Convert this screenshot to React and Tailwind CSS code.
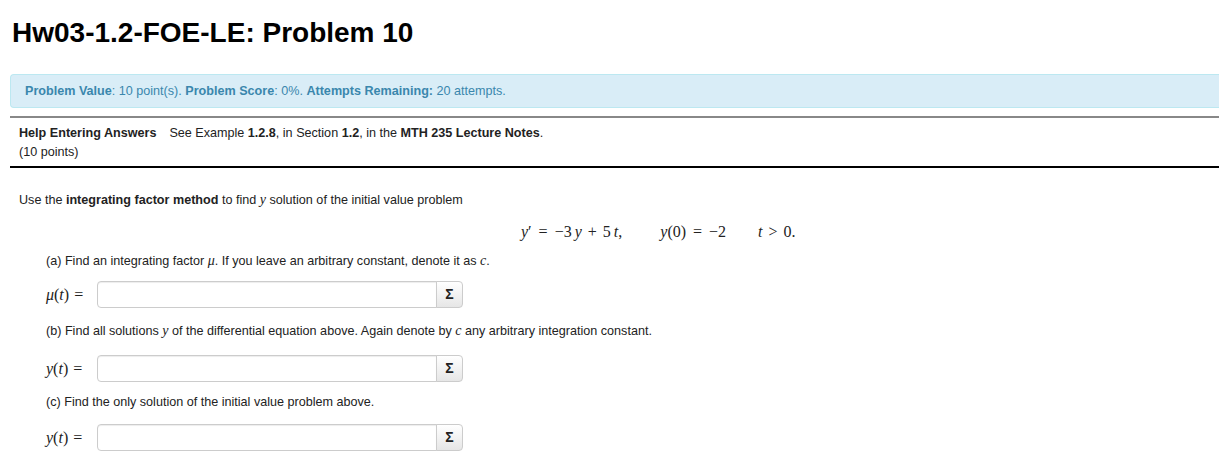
const serif = { fontFamily: '"Liberation Serif", "DejaVu Serif", serif' };

const M = ({ children }) => (
  <span className="italic text-[14px]" style={serif}>
    {children}
  </span>
);

const Answer = ({ label }) => (
  <div className="flex items-center pl-[46px]">
    <span className="w-[51px] text-[16px] text-[#222]" style={serif}>
      {label}
    </span>
    <div className="flex h-[27px]">
      <div className="w-[340px] rounded-l-[4px] border border-[#cccccc] bg-white shadow-[inset_0_1px_1px_rgba(0,0,0,0.075)]" />
      <button className="w-[27px] -ml-px rounded-r-[4px] border border-[#cccccc] bg-gradient-to-b from-white to-[#e6e6e6] text-[14px] font-bold text-[#222] flex items-center justify-center">
        Σ
      </button>
    </div>
  </div>
);

export default function App() {
  return (
    <div
      className="min-h-screen bg-white text-[12.6px] text-[#333]"
      style={{ fontFamily: '"Liberation Sans", Arial, sans-serif' }}
    >
      <h1 className="pt-[16px] pl-[12px] text-[28px] font-bold leading-[34px] text-black">
        Hw03-1.2-FOE-LE: Problem 10
      </h1>

      <div className="mt-[24px] ml-[10px] h-[34px] flex items-center rounded-l-[4px] border border-r-0 border-[#bce8f1] bg-[#d9edf7] pl-[14px] text-[#3a87ad]">
        <span>
          <b>Problem Value</b>: 10 point(s). <b>Problem Score</b>: 0%. <b>Attempts Remaining:</b> 20 attempts.
        </span>
      </div>

      <div className="mt-[8px] ml-[10px] border-t-2 border-[#888888] pt-[6px] pl-[9px] pb-[4px] border-b-2 border-b-black">
        <div className="leading-[19px] text-[#222]">
          <span className="font-bold">Help Entering Answers</span>
          <span className="ml-[13px]">
            See Example <b>1.2.8</b>, in Section <b>1.2</b>, in the <b>MTH 235 Lecture Notes</b>.
          </span>
        </div>
        <div className="leading-[19px] text-[#222]">(10 points)</div>
      </div>

      <div className="pl-[19px] pt-[23px] text-[#222]">
        <p className="leading-[18px]">
          Use the <b>integrating factor method</b> to find <M>y</M> solution of the initial value problem
        </p>
      </div>

      <div className="mt-[11px] flex items-center pl-[521px] text-[16px] text-[#222]" style={serif}>
        <span className="flex items-center">
          <i>y</i>′<span className="mx-[7px]">=</span>−3<i className="ml-[3px]">y</i>
          <span className="mx-[6px]">+</span>5<i className="ml-[3px]">t</i>,
        </span>
        <span className="ml-[38px] flex items-center">
          <i>y</i>(0)<span className="mx-[7px]">=</span>−2
        </span>
        <span className="ml-[32px] flex items-center">
          <i>t</i>
          <span className="mx-[6px]">&gt;</span>0.
        </span>
      </div>

      <div className="mt-[8px] flex flex-col text-[#222]">
        <p className="pl-[46px] leading-[18px]">
          (a) Find an integrating factor <M>μ</M>. If you leave an arbitrary constant, denote it as <M>c</M>.
        </p>
        <div className="mt-[11px]">
          <Answer label={<><i>μ</i>(<i>t</i>)<span className="ml-[5px]">=</span></>} />
        </div>
        <p className="mt-[14px] pl-[46px] leading-[18px]">
          (b) Find all solutions <M>y</M> of the differential equation above. Again denote by <M>c</M> any arbitrary integration constant.
        </p>
        <div className="mt-[15px]">
          <Answer label={<><i>y</i>(<i>t</i>)<span className="ml-[5px]">=</span></>} />
        </div>
        <p className="mt-[11px] pl-[46px] leading-[18px]">
          (c) Find the only solution of the initial value problem above.
        </p>
        <div className="mt-[13px]">
          <Answer label={<><i>y</i>(<i>t</i>)<span className="ml-[5px]">=</span></>} />
        </div>
      </div>
    </div>
  );
}
